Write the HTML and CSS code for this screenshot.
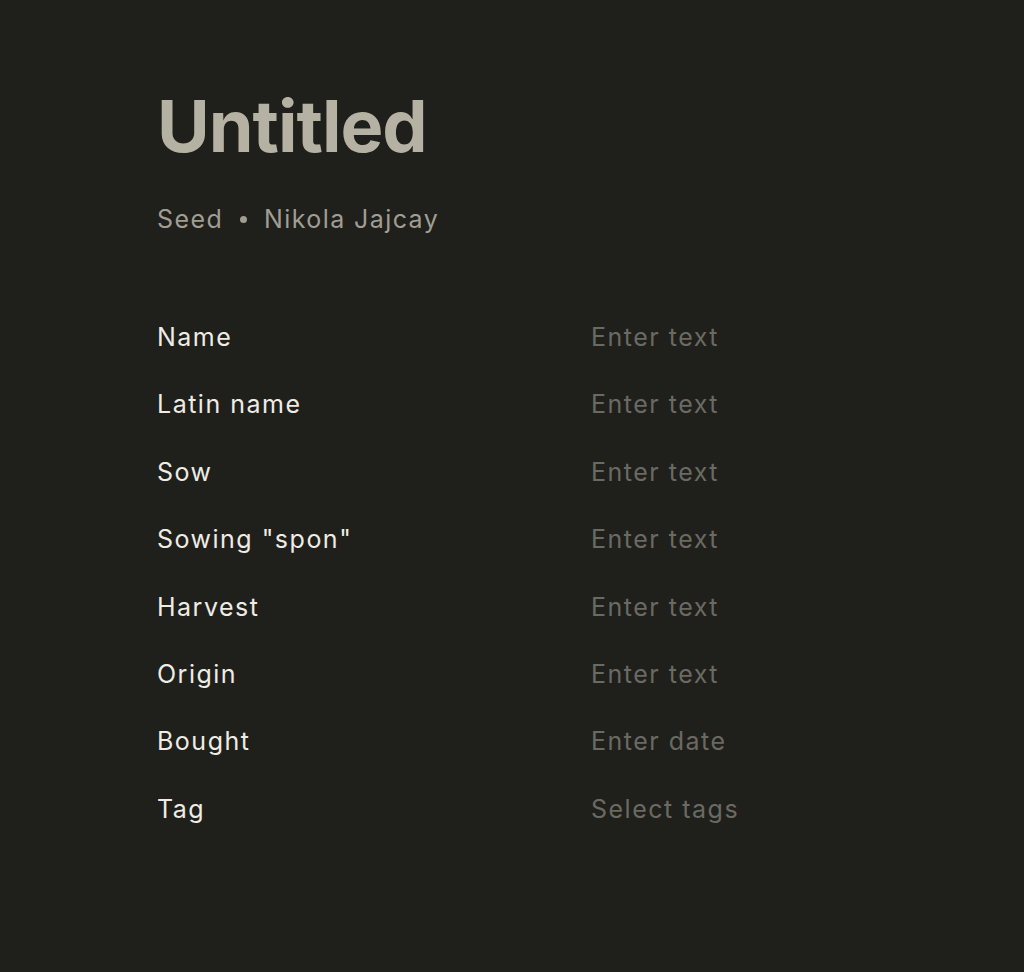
FILE: index.html
```html
<!DOCTYPE html>
<html lang="en">
<head>
<meta charset="utf-8">
<title>Untitled</title>
<link rel="stylesheet" href="styles.css">
</head>
<body>
<main class="page">
  <h1 class="title">Untitled</h1>
  <div class="meta">
    <span>Seed</span>
    <span class="dot"></span>
    <span>Nikola Jajcay</span>
  </div>
  <div class="props">
    <div class="row"><div class="label">Name</div><div class="value">Enter text</div></div>
    <div class="row"><div class="label">Latin name</div><div class="value">Enter text</div></div>
    <div class="row"><div class="label">Sow</div><div class="value">Enter text</div></div>
    <div class="row"><div class="label">Sowing "spon"</div><div class="value">Enter text</div></div>
    <div class="row"><div class="label">Harvest</div><div class="value">Enter text</div></div>
    <div class="row"><div class="label">Origin</div><div class="value">Enter text</div></div>
    <div class="row"><div class="label">Bought</div><div class="value">Enter date</div></div>
    <div class="row"><div class="label">Tag</div><div class="value">Select tags</div></div>
  </div>
</main>
</body>
</html>
```
FILE: styles.css
```css
html, body {
  margin: 0;
  padding: 0;
  background: #1f1f1b;
}
body {
  font-family: Inter, "Noto Sans", sans-serif;
  min-height: 972px;
}
.page {
  padding: 83px 0 0 157px;
}
.title {
  margin: 0;
  font-size: 72px;
  line-height: 86px;
  font-weight: 700;
  color: #b5b2a4;
  letter-spacing: -1px;
}
.meta {
  margin-top: 35px;
  display: flex;
  align-items: center;
  font-size: 25px;
  line-height: 30px;
  letter-spacing: 1.4px;
  color: #a09e93;
}
.dot {
  width: 7px;
  height: 7px;
  border-radius: 50%;
  background: #a09e93;
  margin: 0 17px 0 17px;
}
.props {
  margin-top: 70px;
}
.row {
  display: grid;
  grid-template-columns: 434px 1fr;
  height: 67.4px;
  line-height: 67.4px;
  font-size: 25px;
  letter-spacing: 1.5px;
}
.label {
  color: #eeece4;
}
.value {
  color: #6b6a62;
}
```
